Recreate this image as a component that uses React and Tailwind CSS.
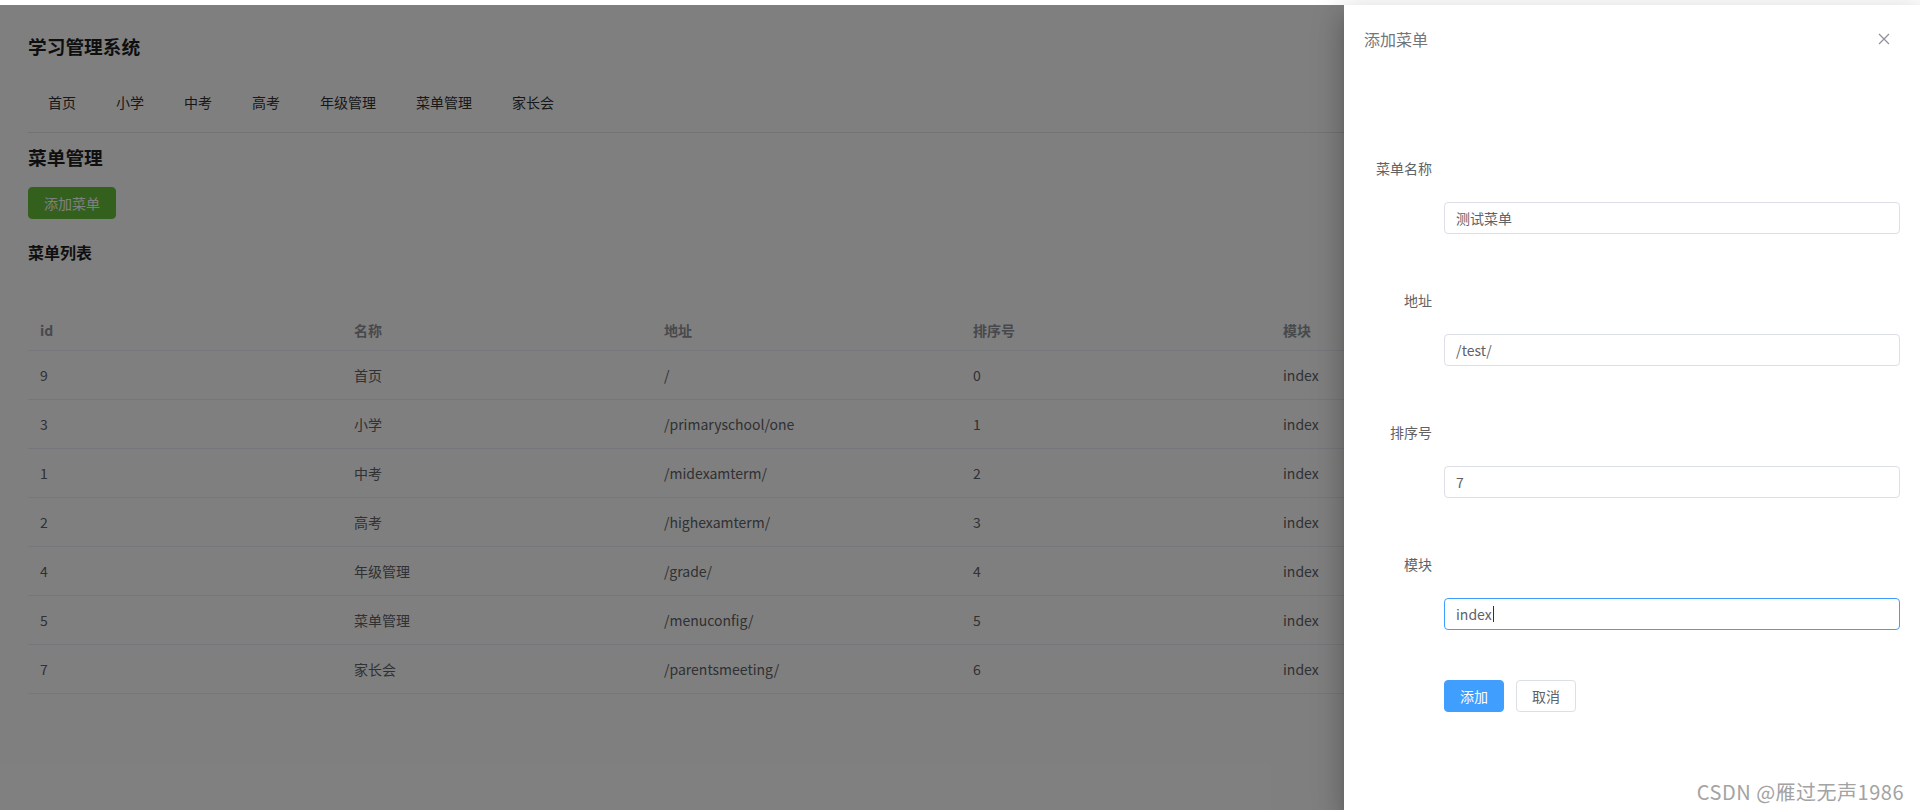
import React from "react";

const navItems = ["首页", "小学", "中考", "高考", "年级管理", "菜单管理", "家长会"];

const rows = [
  { id: 9, name: "首页", path: "/", sort: 0, module: "index" },
  { id: 3, name: "小学", path: "/primaryschool/one", sort: 1, module: "index" },
  { id: 1, name: "中考", path: "/midexamterm/", sort: 2, module: "index" },
  { id: 2, name: "高考", path: "/highexamterm/", sort: 3, module: "index" },
  { id: 4, name: "年级管理", path: "/grade/", sort: 4, module: "index" },
  { id: 5, name: "菜单管理", path: "/menuconfig/", sort: 5, module: "index" },
  { id: 7, name: "家长会", path: "/parentsmeeting/", sort: 6, module: "index" },
];

const fields = [
  { label: "菜单名称", value: "测试菜单" },
  { label: "地址", value: "/test/" },
  { label: "排序号", value: "7" },
  { label: "模块", value: "index", focused: true },
];

function FormItem({ label, value, focused, first }) {
  return (
    <div className={first ? "mt-[95px]" : "mt-[46px]"}>
      <div className="w-[80px] pr-[12px] text-right text-[14px] leading-[40px] text-[#606266]">{label}</div>
      <div
        className={
          "mt-[14px] ml-[80px] h-[32px] rounded-[4px] border bg-white pl-[11px] flex items-center text-[14px] text-[#606266] " +
          (focused ? "border-[#409eff]" : "border-[#dcdfe6]")
        }
      >
        <span>{value}</span>
        {focused && <span className="ml-px h-[16px] w-px bg-[#303133]" />}
      </div>
    </div>
  );
}

export default function App() {
  return (
    <div className="relative flex h-[810px] w-[1920px] flex-col overflow-hidden bg-white font-['Noto_Sans_CJK_SC',sans-serif]">
      <div className="h-[5px] bg-white" />
      <div className="relative flex-1 bg-white">
        <main className="px-[28px] text-[#303133]">
          <h3 className="pt-[28px] text-[18.72px] font-bold leading-[26px] text-[#1f1f1f]">学习管理系统</h3>
          <nav className="mt-[13px] flex border-b border-[#e6e6e6]">
            {navItems.map((item) => (
              <div key={item} className="h-[60px] px-[20px] text-[14px] leading-[60px] text-[#303133]">
                {item}
              </div>
            ))}
          </nav>
          <h3 className="mt-[11px] text-[18.72px] font-bold leading-[26px] text-[#1f1f1f]">菜单管理</h3>
          <button className="mt-[17px] h-[32px] rounded-[4px] border border-[#67c23a] bg-[#67c23a] px-[15px] text-[14px] leading-none text-white">
            添加菜单
          </button>
          <h4 className="mt-[22px] text-[16px] font-bold leading-[22px] text-[#1f1f1f]">菜单列表</h4>

          <div className="mt-[47px] text-[14px]">
            <div className="grid h-[41px] grid-cols-[314px_310px_309px_310px_1fr] items-center border-b border-[#ebeef5] font-bold text-[#909399]">
              <div className="pl-[12px]">id</div>
              <div className="pl-[12px]">名称</div>
              <div className="pl-[12px]">地址</div>
              <div className="pl-[12px]">排序号</div>
              <div className="pl-[12px]">模块</div>
            </div>
            {rows.map((r) => (
              <div
                key={r.id}
                className="grid h-[49px] grid-cols-[314px_310px_309px_310px_1fr] items-center border-b border-[#ebeef5] text-[#606266]"
              >
                <div className="pl-[12px]">{r.id}</div>
                <div className="pl-[12px]">{r.name}</div>
                <div className="pl-[12px]">{r.path}</div>
                <div className="pl-[12px]">{r.sort}</div>
                <div className="pl-[12px]">{r.module}</div>
              </div>
            ))}
          </div>
        </main>

        <div className="absolute inset-0 bg-black/50" />

        <aside className="absolute bottom-0 right-0 top-0 w-[576px] bg-white px-[20px] shadow-[0_8px_10px_-5px_rgba(0,0,0,0.2),0_16px_24px_2px_rgba(0,0,0,0.14),0_6px_30px_5px_rgba(0,0,0,0.12)]">
          <div className="flex items-center justify-between pt-[20px]">
            <span className="text-[16px] leading-[28px] text-[#72767b]">添加菜单</span>
            <svg width="12" height="12" viewBox="0 0 12 12" className="mr-[10px]">
              <path d="M1 1L11 11M11 1L1 11" stroke="#909399" strokeWidth="1.3" fill="none" />
            </svg>
          </div>

          {fields.map((f, i) => (
            <FormItem key={f.label} {...f} first={i === 0} />
          ))}

          <div className="ml-[80px] mt-[50px] flex gap-[12px]">
            <button className="h-[32px] rounded-[4px] border border-[#409eff] bg-[#409eff] px-[15px] text-[14px] leading-none text-white">
              添加
            </button>
            <button className="h-[32px] rounded-[4px] border border-[#dcdfe6] bg-white px-[15px] text-[14px] leading-none text-[#606266]">
              取消
            </button>
          </div>
        </aside>
      </div>

      <div className="absolute bottom-[6px] right-[16px] text-xl leading-[24px] tracking-[0.5px] text-[#a3a3a3] [text-shadow:0_0_1px_#ffffff]">
        CSDN @雁过无声1986
      </div>
    </div>
  );
}
